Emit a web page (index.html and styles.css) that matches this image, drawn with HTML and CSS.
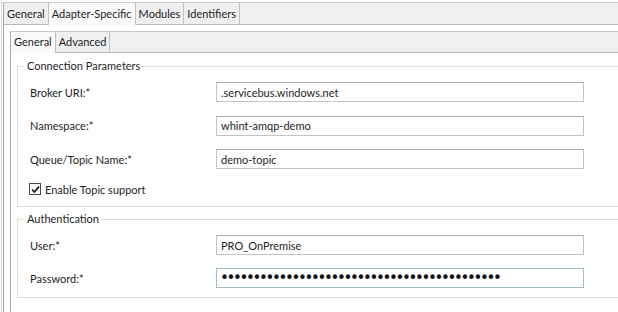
FILE: index.html
```html
<!DOCTYPE html>
<html>
<head>
<meta charset="utf-8">
<link rel="stylesheet" href="styles.css">
</head>
<body>
<div class="window">
  <div class="tabbar outer-tabs">
    <div class="tab">General</div>
    <div class="tab active">Adapter-Specific</div>
    <div class="tab">Modules</div>
    <div class="tab">Identifiers</div>
  </div>
  <div class="panel">
    <div class="tabbar inner-tabs">
      <div class="tab active">General</div>
      <div class="tab">Advanced</div>
    </div>
    <div class="subpanel">
      <fieldset class="group conn">
        <legend>Connection Parameters</legend>
        <div class="field"><label>Broker URI:*</label><input class="text" value=".servicebus.windows.net"></div>
        <div class="field"><label>Namespace:*</label><input class="text" value="whint-amqp-demo"></div>
        <div class="field"><label>Queue/Topic Name:*</label><input class="text" value="demo-topic"></div>
        <div class="check"><span class="box"><svg width="9" height="9" viewBox="0 0 9 9"><path d="M1 4.6 L3.4 7 L8 1.6" fill="none" stroke="#1a1a1a" stroke-width="1.7"/></svg></span>Enable Topic support</div>
      </fieldset>
      <fieldset class="group auth">
        <legend>Authentication</legend>
        <div class="field"><label>User:*</label><input class="text" value="PRO_OnPremise"></div>
        <div class="field"><label>Password:*</label><input class="text pw" type="password" value="abcdefghijklmnopqrstuvwxyzabcdefghijklmnopq"></div>
      </fieldset>
    </div>
  </div>
</div>
</body>
</html>
```
FILE: styles.css
```css
html, body {
  margin: 0;
  padding: 0;
  background: #ffffff;
}
body {
  font-family: Lato, "Noto Sans", sans-serif;
  font-size: 11px;
  color: #1e1e1e;
  width: 618px;
  height: 312px;
  overflow: hidden;
}
.window {
  box-sizing: border-box;
  display: flex;
  flex-direction: column;
  height: 312px;
  margin-left: 1px;
  border-left: 1px solid #d6d6d6;
  padding-left: 1px;
  padding-top: 2px;
}
.tabbar {
  display: flex;
  flex: none;
  background: #efefef;
  border-top: 1px solid #c8c8c8;
  border-bottom: 1px solid #b8b8b8;
  border-left: 1px solid #a9a9a9;
}
.outer-tabs { height: 21px; }
.inner-tabs { height: 20px; }
.tab {
  padding: 0 3px;
  border-right: 1px solid #c2c2c2;
  line-height: 21px;
  color: #1e1e1e;
  white-space: nowrap;
}
.inner-tabs .tab { line-height: 20px; }
.tab.active {
  background: #f9f9f9;
  height: calc(100% + 1px);
}
.panel {
  flex: 1;
  display: flex;
  flex-direction: column;
  border-left: 1px solid #a9a9a9;
  padding: 6px 0 0 6px;
}
.subpanel {
  flex: 1;
  border-left: 1px solid #a9a9a9;
  padding: 5px 0 0 6px;
}
.group {
  margin: 0;
  padding: 8px 0 9px 12px;
  border: 1px solid #dcdcdc;
  border-right: none;
  min-width: 0;
}
.group legend {
  margin-left: -5px;
  padding: 0 2px;
  line-height: 16px;
}
.auth {
  margin-top: 4px;
}
.field {
  display: flex;
  align-items: center;
  height: 20px;
}
.field + .field {
  margin-top: 13.5px;
}
.auth .field + .field { margin-top: 13px; }
.field label {
  width: 186px;
  flex: none;
}
.text {
  box-sizing: border-box;
  width: 368px;
  height: 20px;
  margin: 0;
  padding: 0 4px;
  border: 1px solid #c4c4c4;
  border-top-color: #ababab;
  font-family: Lato, "Noto Sans", sans-serif;
  font-size: 11px;
  color: #1e1e1e;
  outline: none;
  background: #fff;
}
.text.pw {
  border-color: #9ec0ca;
  font-family: "DejaVu Sans", sans-serif;
  font-size: 15px;
  letter-spacing: -2.35px;
  padding-left: 3px;
  color: #111;
}
.check {
  display: flex;
  align-items: center;
  height: 16px;
  margin-top: 12px;
  margin-left: -1px;
}
.box {
  box-sizing: border-box;
  width: 12px;
  height: 12px;
  border: 1px solid #4a4a4a;
  background: #fff;
  display: flex;
  align-items: center;
  justify-content: center;
  margin-right: 4px;
}
```
